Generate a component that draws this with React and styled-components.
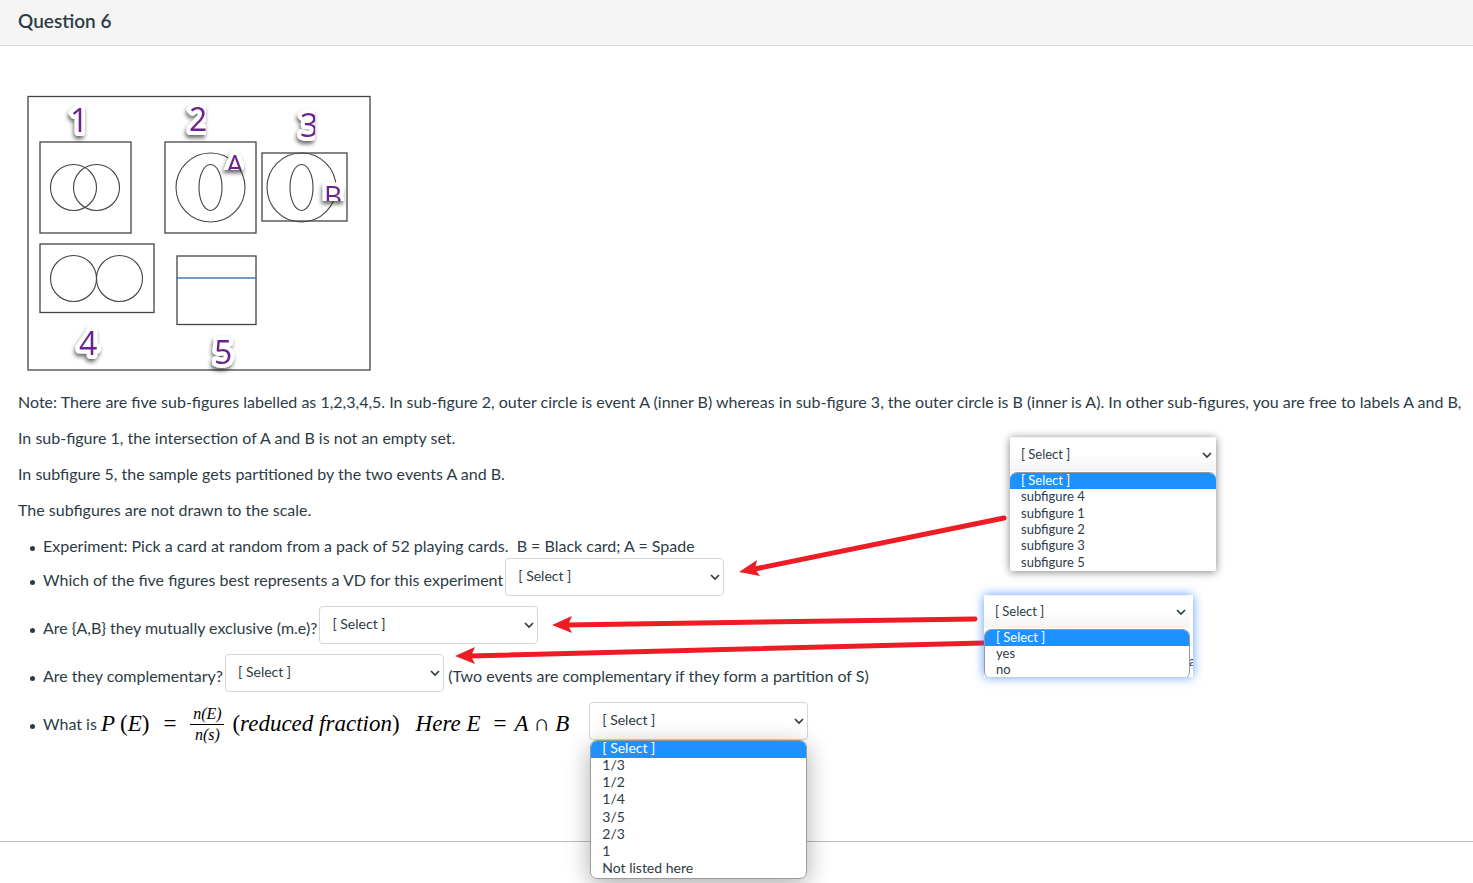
import React from "react";
import styled, { createGlobalStyle } from "styled-components";

const GlobalStyle = createGlobalStyle`
  *, *::before, *::after { box-sizing: border-box; }
  body {
    margin: 0;
    background: #fff;
    color: #2d3b45;
    font: 16px/24px Lato, "Liberation Sans", sans-serif;
    overflow-x: hidden;
  }
`;

const Page = styled.div`
  position: relative;
`;

const Header = styled.header`
  display: flex;
  align-items: center;
  height: 46px;
  padding: 0 18px 3px;
  background: #f5f5f5;
  border-bottom: 1px solid #ddd;
`;

const Title = styled.h1`
  margin: 0;
  font-size: 19px;
  line-height: 24px;
  font-weight: 600;
`;

const Body = styled.main`
  padding: 46px 18px 0;
`;

const Diagram = styled.svg`
  display: block;
  margin: 0 0 11px 6px;
`;

const Paragraph = styled.p`
  margin: 0 0 12px;
  white-space: nowrap;
`;

const Questions = styled.ul`
  margin: 0;
  padding: 0 0 0 25px;
  list-style: none;
`;

const Question = styled.li`
  white-space: nowrap;

  &::before {
    content: "";
    display: inline-block;
    width: 5px;
    height: 5px;
    margin: 0 8px 1px -13px;
    border-radius: 50%;
    background: #2d3b45;
  }
`;

const Picker = styled.span`
  position: relative;
  display: inline-block;
  vertical-align: middle;
  width: 219px;
  margin: 0 0 10px ${(p) => p.$indent || -2}px;
`;

const ChevronIcon = styled.svg`
  position: absolute;
  top: 50%;
  right: 3px;
  margin-top: -6px;
  pointer-events: none;
`;

const SelectBox = styled.select`
  display: block;
  appearance: none;
  width: 100%;
  height: ${(p) => p.$height || 38}px;
  padding: 0 24px 2px ${(p) => p.$inset || 12}px;
  border: 1px solid ${(p) => (p.$plain ? "transparent" : "#d2d6d9")};
  border-radius: 4px;
  background: ${(p) => (p.$plain ? "linear-gradient(#fff 50%, #f3f3f3)" : "#fff")};
  color: #2d3b45;
  font: ${(p) => p.$size || 14}px/20px Lato, "Liberation Sans", sans-serif;
`;

const SelectFrame = styled.span`
  position: relative;
  display: block;
  width: ${(p) => (p.$width ? p.$width + "px" : "auto")};
`;

const OptionList = styled.ul`
  display: grid;
  grid-auto-rows: 1fr;
  height: ${(p) => p.$height}px;
  margin: 0;
  padding: 0;
  list-style: none;
  overflow: hidden;
  background: #fff;
  border: 1px solid #9a9a9a;
  border-width: 1px ${(p) => (p.$edge ? 1 : 0)}px ${(p) => (p.$edge ? 1 : 0)}px;
  border-radius: 7px;
  font-size: ${(p) => p.$size}px;
  line-height: 14px;
`;

const Option = styled.li`
  padding-left: 11px;
  background: ${(p) => (p.$active ? "#1e90ff" : "transparent")};
  color: ${(p) => (p.$active ? "#fff" : "#2d3b45")};
`;

const OpenMenu = styled.div`
  position: absolute;
  z-index: 2;
  top: 100%;
  left: 1px;
  width: 217px;
  border-radius: 7px;
  box-shadow: 0 6px 24px rgba(0, 0, 0, 0.32);
`;

const Callout = styled.aside`
  position: absolute;
  z-index: 2;
  left: ${(p) => p.$left}px;
  top: ${(p) => p.$top}px;
  width: ${(p) => p.$width}px;
  height: ${(p) => p.$height}px;
  overflow: hidden;
  background: #fff;
  border-radius: ${(p) => p.$radius || 0}px;
  box-shadow: ${(p) => p.$shadow};
`;

const ClippedWord = styled.span`
  position: absolute;
  left: 205px;
  bottom: 4px;
  font-size: 14px;
`;

const MenuArea = styled.div`
  position: relative;
  z-index: 1;
  width: ${(p) => p.$width}px;
`;

const Arrows = styled.svg`
  position: absolute;
  z-index: 1;
  left: 0;
  top: 0;
  pointer-events: none;
`;

const Formula = styled.span`
  display: inline-flex;
  align-items: center;
  vertical-align: middle;
  height: 38px;
  margin-bottom: 4px;
  color: #000;
  font: italic 23px/28px "Liberation Serif", serif;
`;

const Term = styled.span`
  margin-left: ${(p) => p.$gap || 0}px;
  font-style: ${(p) => (p.$upright ? "normal" : "italic")};
`;

const Fraction = styled.span`
  display: inline-flex;
  flex-direction: column;
  align-items: center;
  width: 34px;
  margin-left: 14px;
  font-size: 16px;
  line-height: 20px;
`;

const Numerator = styled.span`
  width: 100%;
  text-align: center;
  border-bottom: 1px solid #000;
`;

const Divider = styled.hr`
  height: 0;
  margin: 91px 0 41px;
  border: 0;
  border-top: 1px solid #bbb;
`;

const Chevron = () => (
  <ChevronIcon width="12" height="12" viewBox="0 0 12 12" fill="none" stroke="#2d3b45" strokeWidth="1.7">
    <path d="M2 4l4 4 4-4" />
  </ChevronIcon>
);

const Options = ({ items, ...rest }) => (
  <OptionList role="listbox" aria-label="Answers" {...rest}>
    {items.map((item, i) => (
      <Option key={item} role="option" aria-selected={i === 0} $active={i === 0}>
        {item}
      </Option>
    ))}
  </OptionList>
);

const SelectControl = ({ label, width, ...rest }) => (
  <SelectFrame $width={width}>
    <SelectBox aria-label={label} {...rest}>
      <option>[ Select ]</option>
    </SelectBox>
    <Chevron />
  </SelectFrame>
);

const FIGURES = ["[ Select ]", "subfigure 4", "subfigure 1", "subfigure 2", "subfigure 3", "subfigure 5"];
const YES_NO = ["[ Select ]", "yes", "no"];
const FRACTIONS = ["[ Select ]", "1/3", "1/2", "1/4", "3/5", "2/3", "1", "Not listed here"];

const LABELS = [
  { text: "1", x: 46, y: 40, size: 32, clip: [36, 8, 25, 38] },
  { text: "2", x: 165, y: 39, size: 32, clip: [155, 8, 27, 36] },
  { text: "3", x: 276, y: 45, size: 32, clip: [265, 14, 26, 38] },
  { text: "4", x: 55, y: 263, size: 32, clip: [45, 230, 40, 44] },
  { text: "5", x: 190, y: 272, size: 32, clip: [180, 238, 40, 44] },
  { text: "A", x: 202, y: 83, size: 28, clip: [198, 56, 22, 22] },
  { text: "B", x: 300, y: 114, size: 28, clip: [298, 88, 22, 21] },
];

const VennDiagrams = () => (
  <Diagram width="354" height="287" viewBox="0 0 354 287" role="img" aria-label="Five Venn diagrams">
    <defs>
      <filter id="lift" x="-50%" y="-50%" width="200%" height="200%">
        <feDropShadow dx="-1" dy="3" stdDeviation="2" floodColor="#000" floodOpacity="0.6" />
      </filter>
      {LABELS.map((l) => (
        <clipPath key={l.text} id={"clip" + l.text}>
          <rect x={l.clip[0]} y={l.clip[1]} width={l.clip[2]} height={l.clip[3]} />
        </clipPath>
      ))}
    </defs>
    <g fill="none" stroke="#444" strokeWidth="1.3">
      <rect x="4" y="4.500" width="342" height="273.500" />
      <rect x="16" y="50" width="91" height="91" />
      <rect x="141" y="50" width="91" height="91" />
      <rect x="238" y="61" width="85" height="68" />
      <rect x="16" y="152" width="114" height="68.500" />
      <rect x="153" y="164" width="79" height="68.500" />
      <g strokeWidth="1.1">
        <circle cx="49.500" cy="95.500" r="23" />
        <circle cx="72.500" cy="95.500" r="23" />
        <circle cx="186.500" cy="95.500" r="34.500" />
        <ellipse cx="186.500" cy="95.500" rx="11.500" ry="23" />
        <circle cx="277.500" cy="95.500" r="34.500" />
        <ellipse cx="277.500" cy="95.500" rx="11.500" ry="23" />
        <circle cx="49.500" cy="186.500" r="23" />
        <circle cx="95.500" cy="186.500" r="23" />
      </g>
      <path d="M152 186h81" stroke="#4a78bd" />
    </g>
    {LABELS.map((l) => (
      <g key={l.text} filter="url(#lift)">
        <g clipPath={"url(#clip" + l.text + ")"}>
          <text
            x={l.x}
            y={l.y}
            fontFamily='"Open Sans", sans-serif'
            fontSize={l.size}
            fontWeight="500"
            fill="#6b2490"
            stroke="#fff"
            strokeWidth="8"
            strokeLinejoin="round"
            paintOrder="stroke"
          >
            {l.text}
          </text>
        </g>
      </g>
    ))}
  </Diagram>
);

export default function App() {
  return (
    <Page>
      <GlobalStyle />
      <Header>
        <Title>Question 6</Title>
      </Header>
      <Body>
        <VennDiagrams />
        <Paragraph>
          Note: There are five sub-figures labelled as 1,2,3,4,5. In sub-figure 2, outer circle is event A (inner B)
          whereas in sub-figure 3, the outer circle is B (inner is A). In other sub-figures, you are free to labels A
          and B,
        </Paragraph>
        <Paragraph>In sub-figure 1, the intersection of A and B is not an empty set.</Paragraph>
        <Paragraph>In subfigure 5, the sample gets partitioned by the two events A and B.</Paragraph>
        <Paragraph>The subfigures are not drawn to the scale.</Paragraph>
        <Questions>
          <Question>
            Experiment: Pick a card at random from a pack of 52 playing cards.&nbsp; B = Black card; A = Spade
          </Question>
          <Question>
            Which of the five figures best represents a VD for this experiment{" "}
            <Picker>
              <SelectControl label="Figure for this experiment" />
            </Picker>
          </Question>
          <Question>
            Are {"{A,B}"} they mutually exclusive (m.e)?{" "}
            <Picker>
              <SelectControl label="Mutually exclusive" />
            </Picker>
          </Question>
          <Question>
            Are they complementary?{" "}
            <Picker>
              <SelectControl label="Complementary" />
            </Picker>{" "}
            (Two events are complementary if they form a partition of S)
          </Question>
          <Question>
            What is{" "}
            <Formula>
              <Term>P</Term>
              <Term $gap={5}>
                <Term $upright>(</Term>E<Term $upright>)</Term>
              </Term>
              <Term $upright $gap={14}>=</Term>
              <Fraction>
                <Numerator>n(E)</Numerator>
                <span>n(s)</span>
              </Fraction>
              <Term $gap={8}>
                <Term $upright>(</Term>reduced fraction<Term $upright>)</Term>
              </Term>
              <Term $gap={16}>Here E</Term>
              <Term $upright $gap={13}>=</Term>
              <Term $gap={8}>A</Term>
              <Term $upright $gap={5}>∩</Term>
              <Term $gap={5}>B</Term>
            </Formula>
            <Picker $indent={20}>
              <SelectControl label="Probability" />
              <OpenMenu>
                <Options items={FRACTIONS} $height={139} $size={14} $edge />
              </OpenMenu>
            </Picker>
          </Question>
        </Questions>
      </Body>
      <Divider />
      <Arrows width="1100" height="700" viewBox="0 0 1100 700" fill="#ee1c25" stroke="#ee1c25" strokeWidth="5" strokeLinecap="round">
        <path d="M1004 518L755 569" />
        <path d="M739 572l18-12-2 9 5 7z" strokeWidth="0" />
        <path d="M975 619L566 625" />
        <path d="M552 625l20-9-4 9 4 8z" strokeWidth="0" />
        <path d="M984 643L470 656" />
        <path d="M455 656l20-9-4 9 4 8z" strokeWidth="0" />
      </Arrows>
      <Callout $left={1010} $top={437} $width={206} $height={134} $radius={2} $shadow="0 1px 8px rgba(0, 0, 0, 0.5)">
        <SelectControl label="Figure choices" $plain $height={35} $inset={10} $size={13} />
        <Options items={FIGURES} $height={99} $size={13} />
      </Callout>
      <Callout $left={984} $top={595} $width={209} $height={82} $shadow="0 0 10px rgba(40, 120, 255, 0.75)">
        <SelectControl label="Yes or no choices" width={206} $plain $height={34} $inset={10} $size={13} />
        <ClippedWord aria-hidden="true">a</ClippedWord>
        <MenuArea $width={206}>
          <Options items={YES_NO} $height={50} $size={13} $edge />
        </MenuArea>
      </Callout>
    </Page>
  );
}
